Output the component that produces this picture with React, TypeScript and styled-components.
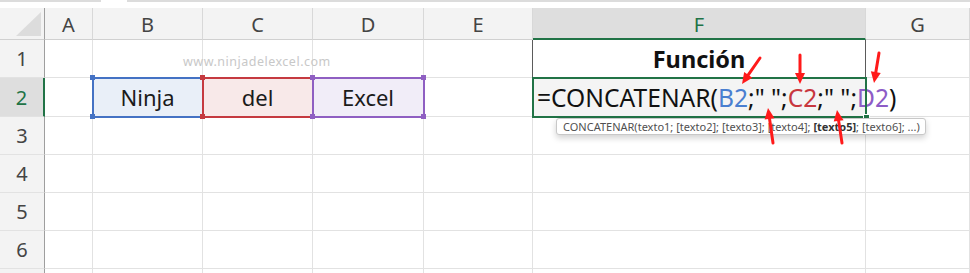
import styled, { createGlobalStyle, css } from 'styled-components';

type Tone = 'blue' | 'red' | 'purple';

const tones: Record<Tone, { line: string; fill: string; text: string }> = {
  blue: { line: '#4472c4', fill: '#e9eff8', text: '#4a7fd0' },
  red: { line: '#c53a40', fill: '#f8e9e9', text: '#c8373e' },
  purple: { line: '#8f5fc2', fill: '#f1edf8', text: '#8d5cc7' },
};

const GREEN = '#217346';

const GlobalStyle = createGlobalStyle`
  html, body {
    margin: 0;
    padding: 0;
    background: #ffffff;
  }
  body {
    font-family: "Noto Sans", "Open Sans", sans-serif;
    overflow: hidden;
  }
`;

const Page = styled.div`
  position: relative;
  width: 970px;
  height: 273px;
  overflow: hidden;
  background: #ffffff;
`;

const TopStrip = styled.div`
  display: flex;
  height: 8px;
  gap: 26px;

  span {
    height: 2px;
    background: #dcdcdc;
  }
  span:first-child { width: 101px; }
  span:last-child { flex: 1; }
`;

const Sheet = styled.div`
  position: relative;
  display: grid;
  grid-template-columns: 45px 48px 110px 110px 111px 109px 333px 1fr;
  grid-template-rows: 32px 38px 39px 38px 38px 38px 38px 38px;
`;

const Corner = styled.div`
  position: relative;
  background: #f3f3f3;
  border-right: 1px solid #9e9e9e;
  border-bottom: 1px solid #d0d0d0;

  &::after {
    content: '';
    position: absolute;
    right: 3px;
    bottom: 3px;
    width: 25px;
    height: 24px;
    background: #dcdcdc;
    clip-path: polygon(100% 0, 100% 100%, 0 100%);
  }
`;

const ColHeader = styled.div<{ $active?: boolean }>`
  display: flex;
  align-items: center;
  justify-content: center;
  padding-top: 2px;
  font-size: 20px;
  color: #444444;
  background: #f3f3f3;
  border-right: 1px solid #d8d8d8;
  border-bottom: 1px solid #d0d0d0;

  ${({ $active }) =>
    $active &&
    css`
      background: #dedede;
      color: ${GREEN};
      border-bottom: 2px solid ${GREEN};
    `}
`;

const RowHeader = styled.div<{ $active?: boolean }>`
  display: flex;
  align-items: center;
  justify-content: center;
  font-size: 20px;
  color: #444444;
  background: #f3f3f3;
  border-right: 1px solid #9e9e9e;
  border-bottom: 1px solid #e2e2e2;

  ${({ $active }) =>
    $active &&
    css`
      background: #dedede;
      color: ${GREEN};
      border-right: 2px solid ${GREEN};
    `}
`;

const Cell = styled.div<{ $tone?: Tone; $boxed?: boolean }>`
  position: relative;
  display: flex;
  align-items: center;
  justify-content: center;
  font-size: 22px;
  color: #1b1b1b;
  border-right: 1px solid #e2e2e2;
  border-bottom: 1px solid #e2e2e2;

  ${({ $tone }) =>
    $tone &&
    css`
      background: ${tones[$tone].fill};
      outline: 2px solid ${tones[$tone].line};
      outline-offset: -1px;
      z-index: 1;
    `}

  ${({ $boxed }) =>
    $boxed &&
    css`
      font-size: 23.5px;
      font-weight: 700;
      color: #111111;
      border: 1px solid #5b5b5b;
      border-top: 0;
      margin-left: -1px;
    `}
`;

const Handle = styled.span<{ $tone: Tone; $x: 'left' | 'right'; $y: 'top' | 'bottom' }>`
  position: absolute;
  width: 5px;
  height: 5px;
  background: ${({ $tone }) => tones[$tone].line};
  ${({ $x }) => `${$x}: -3px;`}
  ${({ $y }) => `${$y}: -3px;`}
`;

const ActiveCell = styled.div`
  position: relative;
  display: flex;
  align-items: center;
  padding-left: 4px;
  background: #f4f4f4;
  outline: 2px solid ${GREEN};
  outline-offset: -1px;
  z-index: 2;
  white-space: nowrap;
  font-size: 24.6px;
  color: #111111;
`;

const FillHandle = styled.span`
  position: absolute;
  right: -4px;
  bottom: -4px;
  width: 5px;
  height: 5px;
  background: ${GREEN};
  border: 1px solid #ffffff;
`;

const Ref = styled.span<{ $tone: Tone }>`
  color: ${({ $tone }) => tones[$tone].text};
`;

const Tooltip = styled.div`
  position: absolute;
  left: 23px;
  top: calc(100% + 1px);
  padding: 0 5px 0 6px;
  height: 15px;
  line-height: 15px;
  font-size: 11px;
  color: #505050;
  background: #ffffff;
  border: 1px solid #c8c8c8;
  border-radius: 3px;
  box-shadow: 0 3px 6px rgba(0, 0, 0, 0.18);

  b {
    color: #333333;
  }
`;

const Watermark = styled.div`
  position: absolute;
  left: 183px;
  top: 45px;
  font-size: 12.5px;
  letter-spacing: 0.5px;
  color: #c8c8c8;
  z-index: 3;
  pointer-events: none;
`;

const Arrows = styled.svg`
  position: absolute;
  inset: 0;
  z-index: 5;
  pointer-events: none;
`;

const cols = ['A', 'B', 'C', 'D', 'E', 'F', 'G'];

const arrowList = [
  { x1: 760, y1: 58, x2: 742, y2: 84 },
  { x1: 800, y1: 55, x2: 800, y2: 84 },
  { x1: 879, y1: 53, x2: 874, y2: 83 },
  { x1: 773, y1: 143, x2: 768, y2: 108 },
  { x1: 842, y1: 143, x2: 837, y2: 110 },
];

const Arrow = ({ x1, y1, x2, y2 }: { x1: number; y1: number; x2: number; y2: number }) => {
  const a = Math.atan2(y2 - y1, x2 - x1);
  const len = 11;
  const w = 5;
  const bx = x2 - len * Math.cos(a);
  const by = y2 - len * Math.sin(a);
  const px = -Math.sin(a) * w;
  const py = Math.cos(a) * w;
  return (
    <g>
      <line x1={x1} y1={y1} x2={bx} y2={by} stroke="#ff1a1a" strokeWidth={3} strokeLinecap="round" />
      <polygon points={`${x2},${y2} ${bx + px},${by + py} ${bx - px},${by - py}`} fill="#ff1a1a" />
    </g>
  );
};

const RangeCell = ({ tone, children }: { tone: Tone; children: string }) => (
  <Cell $tone={tone}>
    {children}
    <Handle $tone={tone} $x="left" $y="top" />
    <Handle $tone={tone} $x="right" $y="top" />
    <Handle $tone={tone} $x="left" $y="bottom" />
    <Handle $tone={tone} $x="right" $y="bottom" />
  </Cell>
);

// rows 3..6 carry their number, row 7 only peeks in at the bottom edge
const EmptyRow = ({ n, label }: { n: number; label?: boolean }) => (
  <>
    <RowHeader>{label ? n : ''}</RowHeader>
    {cols.map((c) => (
      <Cell key={`${c}${n}`} />
    ))}
  </>
);

export default function App() {
  return (
    <Page>
      <GlobalStyle />
      <TopStrip>
        <span />
        <span />
      </TopStrip>
      <Sheet>
        <Corner />
        {cols.map((c) => (
          <ColHeader key={c} $active={c === 'F'}>
            {c}
          </ColHeader>
        ))}

        <RowHeader>1</RowHeader>
        <Cell />
        <Cell />
        <Cell />
        <Cell />
        <Cell />
        <Cell $boxed>Función</Cell>
        <Cell />

        <RowHeader $active>2</RowHeader>
        <Cell />
        <RangeCell tone="blue">Ninja</RangeCell>
        <RangeCell tone="red">del</RangeCell>
        <RangeCell tone="purple">Excel</RangeCell>
        <Cell />
        <ActiveCell>
          =CONCATENAR(<Ref $tone="blue">B2</Ref>;" ";<Ref $tone="red">C2</Ref>;" ";<Ref $tone="purple">D2</Ref>)
          <FillHandle />
          <Tooltip>
            CONCATENAR(texto1; [texto2]; [texto3]; [texto4]; <b>[texto5]</b>; [texto6]; ...)
          </Tooltip>
        </ActiveCell>
        <Cell />

        {[3, 4, 5, 6].map((n) => (
          <EmptyRow key={n} n={n} label />
        ))}
        <EmptyRow n={7} />

        <Watermark>www.ninjadelexcel.com</Watermark>
      </Sheet>
      <Arrows width={970} height={273} viewBox="0 0 970 273">
        {arrowList.map((a, i) => (
          <Arrow key={i} {...a} />
        ))}
      </Arrows>
    </Page>
  );
}
